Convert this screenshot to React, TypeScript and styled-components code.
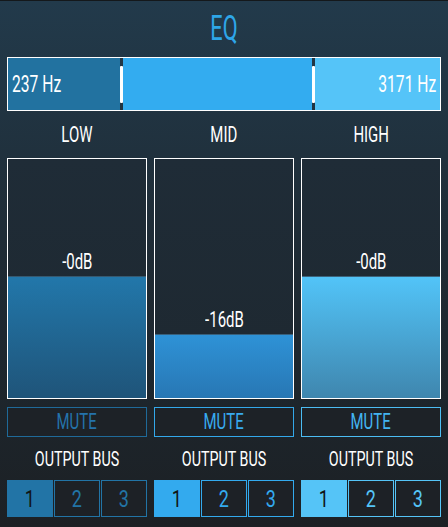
import styled, { createGlobalStyle } from 'styled-components';

const GlobalStyle = createGlobalStyle`
  html, body {
    margin: 0;
    padding: 0;
    background: #1c2024;
  }
  * {
    box-sizing: border-box;
  }
`;

const FONT = `Roboto, "Liberation Sans", sans-serif`;

type Band = {
  name: string;
  color: string;
  muteBorder: string;
  muteText: string;
  fillTop: string;
  fillBottom: string;
  gain: number;
  level: number;
  bus: number;
};

const BANDS: Band[] = [
  {
    name: 'LOW',
    color: '#2274a6',
    muteBorder: '#1f6a99',
    muteText: '#2473ab',
    fillTop: '#2277aa',
    fillBottom: '#1f5479',
    gain: 0,
    level: 122,
    bus: 1,
  },
  {
    name: 'MID',
    color: '#33aaee',
    muteBorder: '#33a8ea',
    muteText: '#38aaee',
    fillTop: '#2e92d6',
    fillBottom: '#2877b4',
    gain: -16,
    level: 64,
    bus: 1,
  },
  {
    name: 'HIGH',
    color: '#55c4f7',
    muteBorder: '#4cbdf3',
    muteText: '#43b4f1',
    fillTop: '#52c4f8',
    fillBottom: '#3f86ae',
    gain: 0,
    level: 122,
    bus: 1,
  },
];

// The UI uses a tall condensed face; squeeze a regular face horizontally.
const Narrow = styled.span<{ $origin?: string; $scale?: number }>`
  display: inline-block;
  white-space: nowrap;
  transform: scaleX(${(p) => p.$scale ?? 0.68});
  transform-origin: ${(p) => p.$origin ?? 'center'};
`;

const Page = styled.div`
  width: 448px;
  height: 527px;
  padding: 0 7px;
  border-top: 1px solid #14181b;
  background: linear-gradient(180deg, #223a4b 0%, #1f2c36 45%, #1c2024 100%);
  font-family: ${FONT};
  overflow: hidden;
`;

const Title = styled.h1`
  margin: 0;
  height: 56px;
  display: flex;
  align-items: center;
  justify-content: center;
  font-size: 35px;
  font-weight: 400;
  color: #2ea6e8;
  line-height: 1;
  padding-bottom: 2px;
`;

const RangeBar = styled.div`
  height: 54px;
  border: 1px solid #ffffff;
  display: flex;
  align-items: center;
`;

const Segment = styled.div<{ $bg: string; $align?: string }>`
  height: 100%;
  background: ${(p) => p.$bg};
  display: flex;
  align-items: center;
  justify-content: ${(p) => p.$align ?? 'flex-start'};
  padding: 0 4px;
  color: #ffffff;
  font-size: 23px;
`;

const Handle = styled.div`
  width: 3px;
  height: 37px;
  background: #ffffff;
  border-radius: 1px;
  flex: none;
`;

const Columns = styled.div`
  display: grid;
  grid-template-columns: repeat(3, 1fr);
  column-gap: 7px;
`;

const Column = styled.div`
  display: flex;
  flex-direction: column;
`;

const BandLabel = styled.div`
  height: 47px;
  display: flex;
  align-items: center;
  justify-content: center;
  color: #ffffff;
  font-size: 22px;
`;

const Meter = styled.div`
  height: 241px;
  border: 1px solid #ffffff;
  background: linear-gradient(180deg, #1f2c37 0%, #1e2830 100%);
  display: flex;
  flex-direction: column;
  justify-content: flex-end;
`;

const Gain = styled.div`
  text-align: center;
  color: #ffffff;
  font-size: 22px;
  line-height: 26px;
  margin-bottom: 1px;
`;

const Fill = styled.div<{ $top: string; $bottom: string }>`
  background: linear-gradient(180deg, ${(p) => p.$top} 0%, ${(p) => p.$bottom} 100%);
  border-top: 1px solid rgba(60, 90, 110, 0.8);
`;

const MuteButton = styled.button<{ $border: string; $text: string }>`
  margin-top: 8px;
  height: 30px;
  background: #1d2227;
  border: 1px solid ${(p) => p.$border};
  color: ${(p) => p.$text};
  font-family: ${FONT};
  font-size: 22px;
  line-height: 1;
  padding: 0;
`;

const BusLabel = styled.div`
  height: 43px;
  display: flex;
  align-items: center;
  justify-content: center;
  color: #ffffff;
  font-size: 21px;
`;

const BusRow = styled.div`
  display: grid;
  grid-template-columns: repeat(3, 1fr);
  column-gap: 1px;
`;

const BusButton = styled.button<{ $color: string; $active: boolean }>`
  height: 37px;
  padding: 0;
  background: ${(p) => (p.$active ? p.$color : '#1d2126')};
  border: 1px solid ${(p) => p.$color};
  color: ${(p) => (p.$active ? '#111417' : p.$color)};
  font-family: ${FONT};
  font-size: 24px;
  line-height: 1;
`;

export default function App() {
  return (
    <>
      <GlobalStyle />
      <Page>
        <Title>
          <Narrow $scale={0.62}>EQ</Narrow>
        </Title>
        <RangeBar>
          <Segment $bg="#2272a0" style={{ width: 112 }}>
            <Narrow $origin="left">237 Hz</Narrow>
          </Segment>
          <Handle />
          <Segment $bg="#33acf0" style={{ width: 189 }} />
          <Handle />
          <Segment $bg="#55c4f8" $align="flex-end" style={{ flex: 1 }}>
            <Narrow $origin="right">3171 Hz</Narrow>
          </Segment>
        </RangeBar>
        <Columns>
          {BANDS.map((band) => (
            <Column key={band.name}>
              <BandLabel>
                <Narrow>{band.name}</Narrow>
              </BandLabel>
              <Meter>
                <Gain>
                  <Narrow>{band.gain === 0 ? '-0dB' : `${band.gain}dB`}</Narrow>
                </Gain>
                <Fill
                  $top={band.fillTop}
                  $bottom={band.fillBottom}
                  style={{ height: band.level }}
                />
              </Meter>
              <MuteButton $border={band.muteBorder} $text={band.muteText}>
                <Narrow>MUTE</Narrow>
              </MuteButton>
              <BusLabel>
                <Narrow>OUTPUT BUS</Narrow>
              </BusLabel>
              <BusRow>
                {[1, 2, 3].map((n) => (
                  <BusButton key={n} $color={band.color} $active={n === band.bus}>
                    <Narrow $scale={0.75}>{n}</Narrow>
                  </BusButton>
                ))}
              </BusRow>
            </Column>
          ))}
        </Columns>
      </Page>
    </>
  );
}
